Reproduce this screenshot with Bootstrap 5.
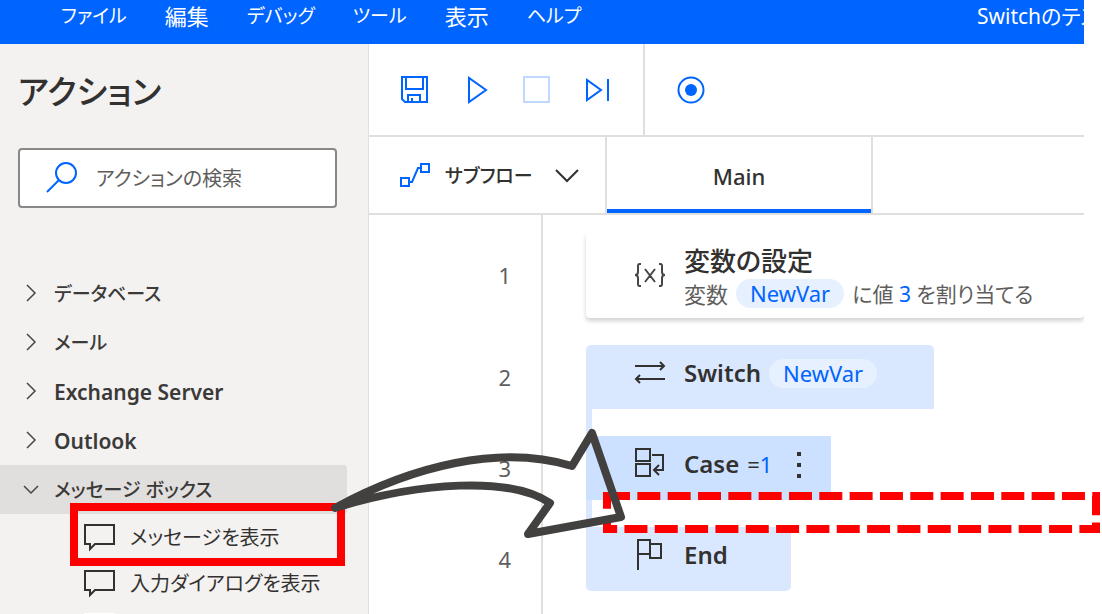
<!DOCTYPE html>
<html lang="ja">
<head>
<meta charset="utf-8">
<meta name="viewport" content="width=device-width, initial-scale=1">
<title>Switchのテスト</title>
<link href="https://cdn.jsdelivr.net/npm/bootstrap@5.3.0/dist/css/bootstrap.min.css" rel="stylesheet">
<style>
  :root { --blue: #0064ff; --ink: #323130; --line: #e1dfdd; --soft: #dae8ff; }
  body { font-family: "Noto Sans", "Noto Sans CJK JP", sans-serif; font-feature-settings: "palt"; font-size: 22px; line-height: 32px; color: var(--ink); background: #fff; }
  button { font-feature-settings: inherit; }
  svg { display: block; flex: none; fill: none; }
  .app-shell { padding-right: 18px; }
  .plain-btn { border: 0; padding: 0; background: none; color: inherit; white-space: nowrap; }
  .menu-bar { background: var(--blue); color: #fff; height: 44px; padding: 0 0 12px 61px; }
  .menu-list { gap: 38px; }
  .kana { font-size: 19px; }
  .flow-title { width: 107px; white-space: nowrap; font-size: 21px; }
  .side-pane { width: 369px; background: #f3f2f1; border-right: 1px solid var(--line); }
  .side-title { font-size: 33px; line-height: 48px; font-weight: 500; padding: 24px 0 0 18px; margin: 0 0 32px; }
  .search-box { margin: 0 31px 61px 18px; height: 60px; border: 2px solid #8a8886; border-radius: 4px; background: #fff; padding: 0 16px 0 26px; gap: 18px; }
  .search-box input { font-size: 20px; border: 0; outline: 0; min-width: 0; padding: 2px 0 0; background: none; font-feature-settings: inherit; }
  .search-box input::placeholder { color: #605e5c; opacity: 1; }
  .tree-btn { height: 49px; width: 347px; padding-left: 22px; gap: 14px; font-weight: 500; font-size: 21px; color: #3b3a39; }
  .tree-btn.kana { font-size: 19px; }
  .tree-btn.latin { font-weight: 600; }
  .tree-btn.is-open { background: #e1dfdd; border-radius: 0 3px 3px 0; }
  .sub-btn { height: 46px; padding: 2px 0 0 84px; gap: 15px; font-size: 20px; }
  .mark-box { left: 70px; top: -11px; width: 275px; height: 63px; border: 8px solid #f00; pointer-events: none; }
  .tool-bar { height: 93px; border-bottom: 2px solid var(--line); }
  .run-tools { width: 276px; padding-left: 31px; gap: 32px; border-right: 2px solid var(--line); }
  .tab-bar { height: 78px; border-bottom: 2px solid var(--line); }
  .sub-flow { width: 238px; padding: 2px 0 0 30px; gap: 14px; border-right: 2px solid var(--line); font-weight: 500; }
  .main-tab { width: 266px; padding-top: 2px; border-right: 2px solid var(--line); font-weight: 500; }
  .main-tab::after { content: ""; position: absolute; left: 0; right: 0; bottom: 0; height: 4px; background: var(--blue); }
  .line-no { width: 174px; padding: 14px 30px 13px 0; border-right: 2px solid var(--line); color: #605e5c; }
  .step-cell { padding: 14px 0 13px 43px; }
  .step-row:first-child > * { padding-top: 17px; }
  .step-box { min-height: 64px; padding: 0 0 8px 48px; gap: 18px; background: var(--soft); position: relative; z-index: 1; }
  .step-card { min-height: 86px; padding-bottom: 0; background: #fff; border-radius: 4px; box-shadow: 0 3px 4px rgba(0,0,0,.18); }
  .step-name { font-size: 24px; font-weight: 600; }
  .card-name { font-size: 26px; font-weight: 500; line-height: 34px; padding-top: 3px; }
  .step-note { color: #605e5c; }
  .note-rest { font-size: 21px; }
  .box-switch { width: 348px; border-radius: 5px 5px 0 0; }
  .box-case { width: 245px; background: #cce0ff; }
  .box-end { width: 205px; border-radius: 0 0 5px 5px; }
  .linked::before { content: ""; position: absolute; left: 43px; top: 0; bottom: 0; width: 6px; background: var(--soft); }
  .linked-start::before { top: 50%; }
  .linked-end::before { bottom: 50%; }
  .var-pill { background: #e6f0ff; color: var(--blue); border-radius: 15px; padding: 0 14px; line-height: 29px; }
  .blue-text { color: var(--blue); }
  .arrow-note { left: 0; top: 0; z-index: 4; pointer-events: none; }
  .dash-note { left: 603px; width: calc(100% - 605px); top: 492px; height: 41px; z-index: 3; pointer-events: none; }
  .dash-note rect { width: calc(100% - 8px); height: 33px; }
</style>
</head>
<body>
<div class="app-shell vh-100 overflow-hidden position-relative d-flex flex-column">
  <header class="menu-bar d-flex align-items-center justify-content-between flex-shrink-0">
    <nav class="menu-list d-flex" aria-label="メニュー">
      <button class="plain-btn kana">ファイル</button>
      <button class="plain-btn">編集</button>
      <button class="plain-btn kana">デバッグ</button>
      <button class="plain-btn kana">ツール</button>
      <button class="plain-btn">表示</button>
      <button class="plain-btn kana">ヘルプ</button>
    </nav>
    <div class="flow-title overflow-hidden">Switchのテスト</div>
  </header>

  <div class="d-flex flex-grow-1">
    <aside class="side-pane flex-shrink-0">
      <h1 class="side-title">アクション</h1>
      <label class="search-box d-flex align-items-center">
        <svg width="32" height="32" viewBox="0 0 32 32" stroke="#0064ff" stroke-width="2"><circle cx="20" cy="11" r="10"/><path d="M13 18 1 30"/></svg>
        <input class="flex-grow-1" type="text" placeholder="アクションの検索" aria-label="アクションの検索">
      </label>
      <ul class="list-unstyled m-0">
        <li><button class="plain-btn tree-btn kana d-flex align-items-center"><svg width="18" height="20" viewBox="0 0 18 20" stroke="#484644" stroke-width="1.5"><path d="m5 1 8 8-8 8"/></svg>データベース</button></li>
        <li><button class="plain-btn tree-btn kana d-flex align-items-center"><svg width="18" height="20" viewBox="0 0 18 20" stroke="#484644" stroke-width="1.5"><path d="m5 1 8 8-8 8"/></svg>メール</button></li>
        <li><button class="plain-btn tree-btn latin d-flex align-items-center"><svg width="18" height="20" viewBox="0 0 18 20" stroke="#484644" stroke-width="1.5"><path d="m5 1 8 8-8 8"/></svg>Exchange Server</button></li>
        <li><button class="plain-btn tree-btn latin d-flex align-items-center"><svg width="18" height="20" viewBox="0 0 18 20" stroke="#484644" stroke-width="1.5"><path d="m5 1 8 8-8 8"/></svg>Outlook</button></li>
        <li>
          <button class="plain-btn tree-btn kana is-open d-flex align-items-center" aria-expanded="true"><svg width="18" height="18" viewBox="0 0 18 18" stroke="#484644" stroke-width="1.5"><path d="m2 5 7 7 7-7"/></svg>メッセージ ボックス</button>
          <ul class="list-unstyled m-0">
            <li class="position-relative">
              <button class="plain-btn sub-btn d-flex align-items-center"><svg width="31" height="28" viewBox="0 0 31 28" stroke="#323130" stroke-width="2"><path d="M1 1h29v19H11l-5 5v-5H1z"/></svg>メッセージを表示</button>
              <div class="mark-box position-absolute"></div>
            </li>
            <li><button class="plain-btn sub-btn d-flex align-items-center"><svg width="31" height="28" viewBox="0 0 31 28" stroke="#323130" stroke-width="2"><path d="M1 1h29v19H11l-5 5v-5H1z"/></svg>入力ダイアログを表示</button></li>
            <li><button class="plain-btn sub-btn d-flex align-items-center" aria-label="選択ダイアログ"><svg width="31" height="34" viewBox="0 0 31 34"><path fill="#fff" d="M0 0h31v34H0z"/></svg></button></li>
          </ul>
        </li>
      </ul>
    </aside>

    <main class="flex-grow-1 d-flex flex-column overflow-hidden">
      <div class="tool-bar d-flex flex-shrink-0">
        <div class="run-tools d-flex align-items-center">
          <button class="plain-btn" aria-label="保存"><svg width="30" height="30" viewBox="0 0 30 30" stroke="#0064ff" stroke-width="2"><path d="M2 2h25v25H5l-3-3zM6 2v12h17V2M8 27v-7h12v7M12 23v4"/></svg></button>
          <button class="plain-btn" aria-label="実行"><svg width="28" height="30" viewBox="0 0 28 30" stroke="#0064ff" stroke-width="2"><path d="M7 3v24l17-12z"/></svg></button>
          <button class="plain-btn" aria-label="停止" disabled><svg width="28" height="30" viewBox="0 0 28 30" stroke="#bfd8ff" stroke-width="2"><path d="M2 2h25v25H2z"/></svg></button>
          <button class="plain-btn" aria-label="次のアクションを実行"><svg width="28" height="30" viewBox="0 0 28 30" stroke="#0064ff" stroke-width="2"><path d="M5 5v20l14-10zM26 4v22"/></svg></button>
        </div>
        <button class="plain-btn ps-4 ms-2" aria-label="レコーダー"><svg width="30" height="30" viewBox="0 0 30 30"><circle cx="14" cy="15" r="12.5" stroke="#0064ff" stroke-width="2"/><circle cx="14" cy="15" r="6" fill="#0064ff"/></svg></button>
      </div>

      <div class="tab-bar d-flex flex-shrink-0">
        <button class="plain-btn kana sub-flow d-flex align-items-center">
          <svg width="32" height="26" viewBox="0 0 32 26" stroke="#0064ff" stroke-width="2"><path d="M2 15h8v8H2zM22 1h8v8h-8zM10 19h3l6-14h3"/></svg>サブフロー
          <svg class="ms-2" width="24" height="16" viewBox="0 0 24 16" stroke="#323130" stroke-width="2"><path d="m1 2 11 11L23 2"/></svg>
        </button>
        <button class="plain-btn main-tab position-relative">Main</button>
      </div>

      <ol class="list-unstyled m-0 flex-grow-1 d-flex flex-column">
        <li class="step-row d-flex">
          <div class="line-no flex-shrink-0 d-flex align-items-center justify-content-end">1</div>
          <div class="step-cell flex-grow-1">
            <div class="step-box step-card d-flex align-items-center">
              <svg width="32" height="26" viewBox="0 0 32 26" stroke="#484644" stroke-width="2"><path d="M7 2H5.500Q4 2 4 4v6q0 3-3 3 3 0 3 3v6q0 2 1.500 2H7M25 2h1.500Q28 2 28 4v6q0 3 3 3-3 0-3 3v6q0 2-1.500 2H25M11 7l10 13M21 7 11 20"/></svg>
              <div>
                <div class="card-name">変数の設定</div>
                <div class="step-note d-flex align-items-center gap-2">変数<span class="var-pill">NewVar</span><span class="note-rest">に値 <span class="blue-text">3</span> を割り当てる</span></div>
              </div>
            </div>
          </div>
        </li>
        <li class="step-row d-flex">
          <div class="line-no flex-shrink-0 d-flex align-items-center justify-content-end">2</div>
          <div class="step-cell linked linked-start position-relative">
            <div class="step-box box-switch d-flex align-items-center">
              <svg width="32" height="24" viewBox="0 0 32 24" stroke="#323130" stroke-width="2"><path d="M1 5h29M26 1l4 4-4 4M31 18H2M6 14l-4 4 4 4"/></svg>
              <div class="d-flex align-items-center gap-2"><span class="step-name">Switch</span><span class="var-pill">NewVar</span></div>
            </div>
          </div>
        </li>
        <li class="step-row d-flex">
          <div class="line-no flex-shrink-0 d-flex align-items-center justify-content-end">3</div>
          <div class="step-cell linked position-relative">
            <div class="step-box box-case d-flex align-items-center">
              <svg width="32" height="34" viewBox="0 0 32 34" stroke="#323130" stroke-width="2"><path d="M2 2h14v12H2zM2 17h14v12H2zM18 8h11v15h-9M25 18l-5 5 5 5"/></svg>
              <div class="d-flex align-items-center gap-2"><span class="step-name">Case</span><span>=<span class="blue-text">1</span></span></div>
              <button class="plain-btn" aria-label="その他"><svg width="16" height="30" viewBox="0 0 16 30"><path fill="#323130" d="M7 3h4v4H7zM7 14h4v4H7zM7 25h4v4H7z"/></svg></button>
            </div>
          </div>
        </li>
        <li class="step-row d-flex">
          <div class="line-no flex-shrink-0 d-flex align-items-center justify-content-end">4</div>
          <div class="step-cell linked linked-end position-relative">
            <div class="step-box box-end d-flex align-items-center">
              <svg width="32" height="38" viewBox="0 0 32 38" stroke="#323130" stroke-width="2"><path d="M4 34V4h12v14H4M16 8h11v14H16v-4"/></svg>
              <span class="step-name">End</span>
            </div>
          </div>
        </li>
        <li class="d-flex flex-grow-1"><div class="line-no py-0"></div></li>
      </ol>
    </main>
  </div>

  <svg class="dash-note position-absolute" stroke="#f00" stroke-width="8" stroke-dasharray="23 7.330"><rect x="4" y="4"/></svg>
  <svg class="arrow-note position-absolute" width="640" height="560" viewBox="0 0 640 560" stroke="#434040" stroke-width="8" stroke-linejoin="round"><path d="M335 508C412 466 500 444 572 466L592 433 621 517 528 534 550 503C510 476 420 482 335 508z"/></svg>
</div>
<script src="https://cdn.jsdelivr.net/npm/bootstrap@5.3.0/dist/js/bootstrap.bundle.min.js"></script>
</body>
</html>
